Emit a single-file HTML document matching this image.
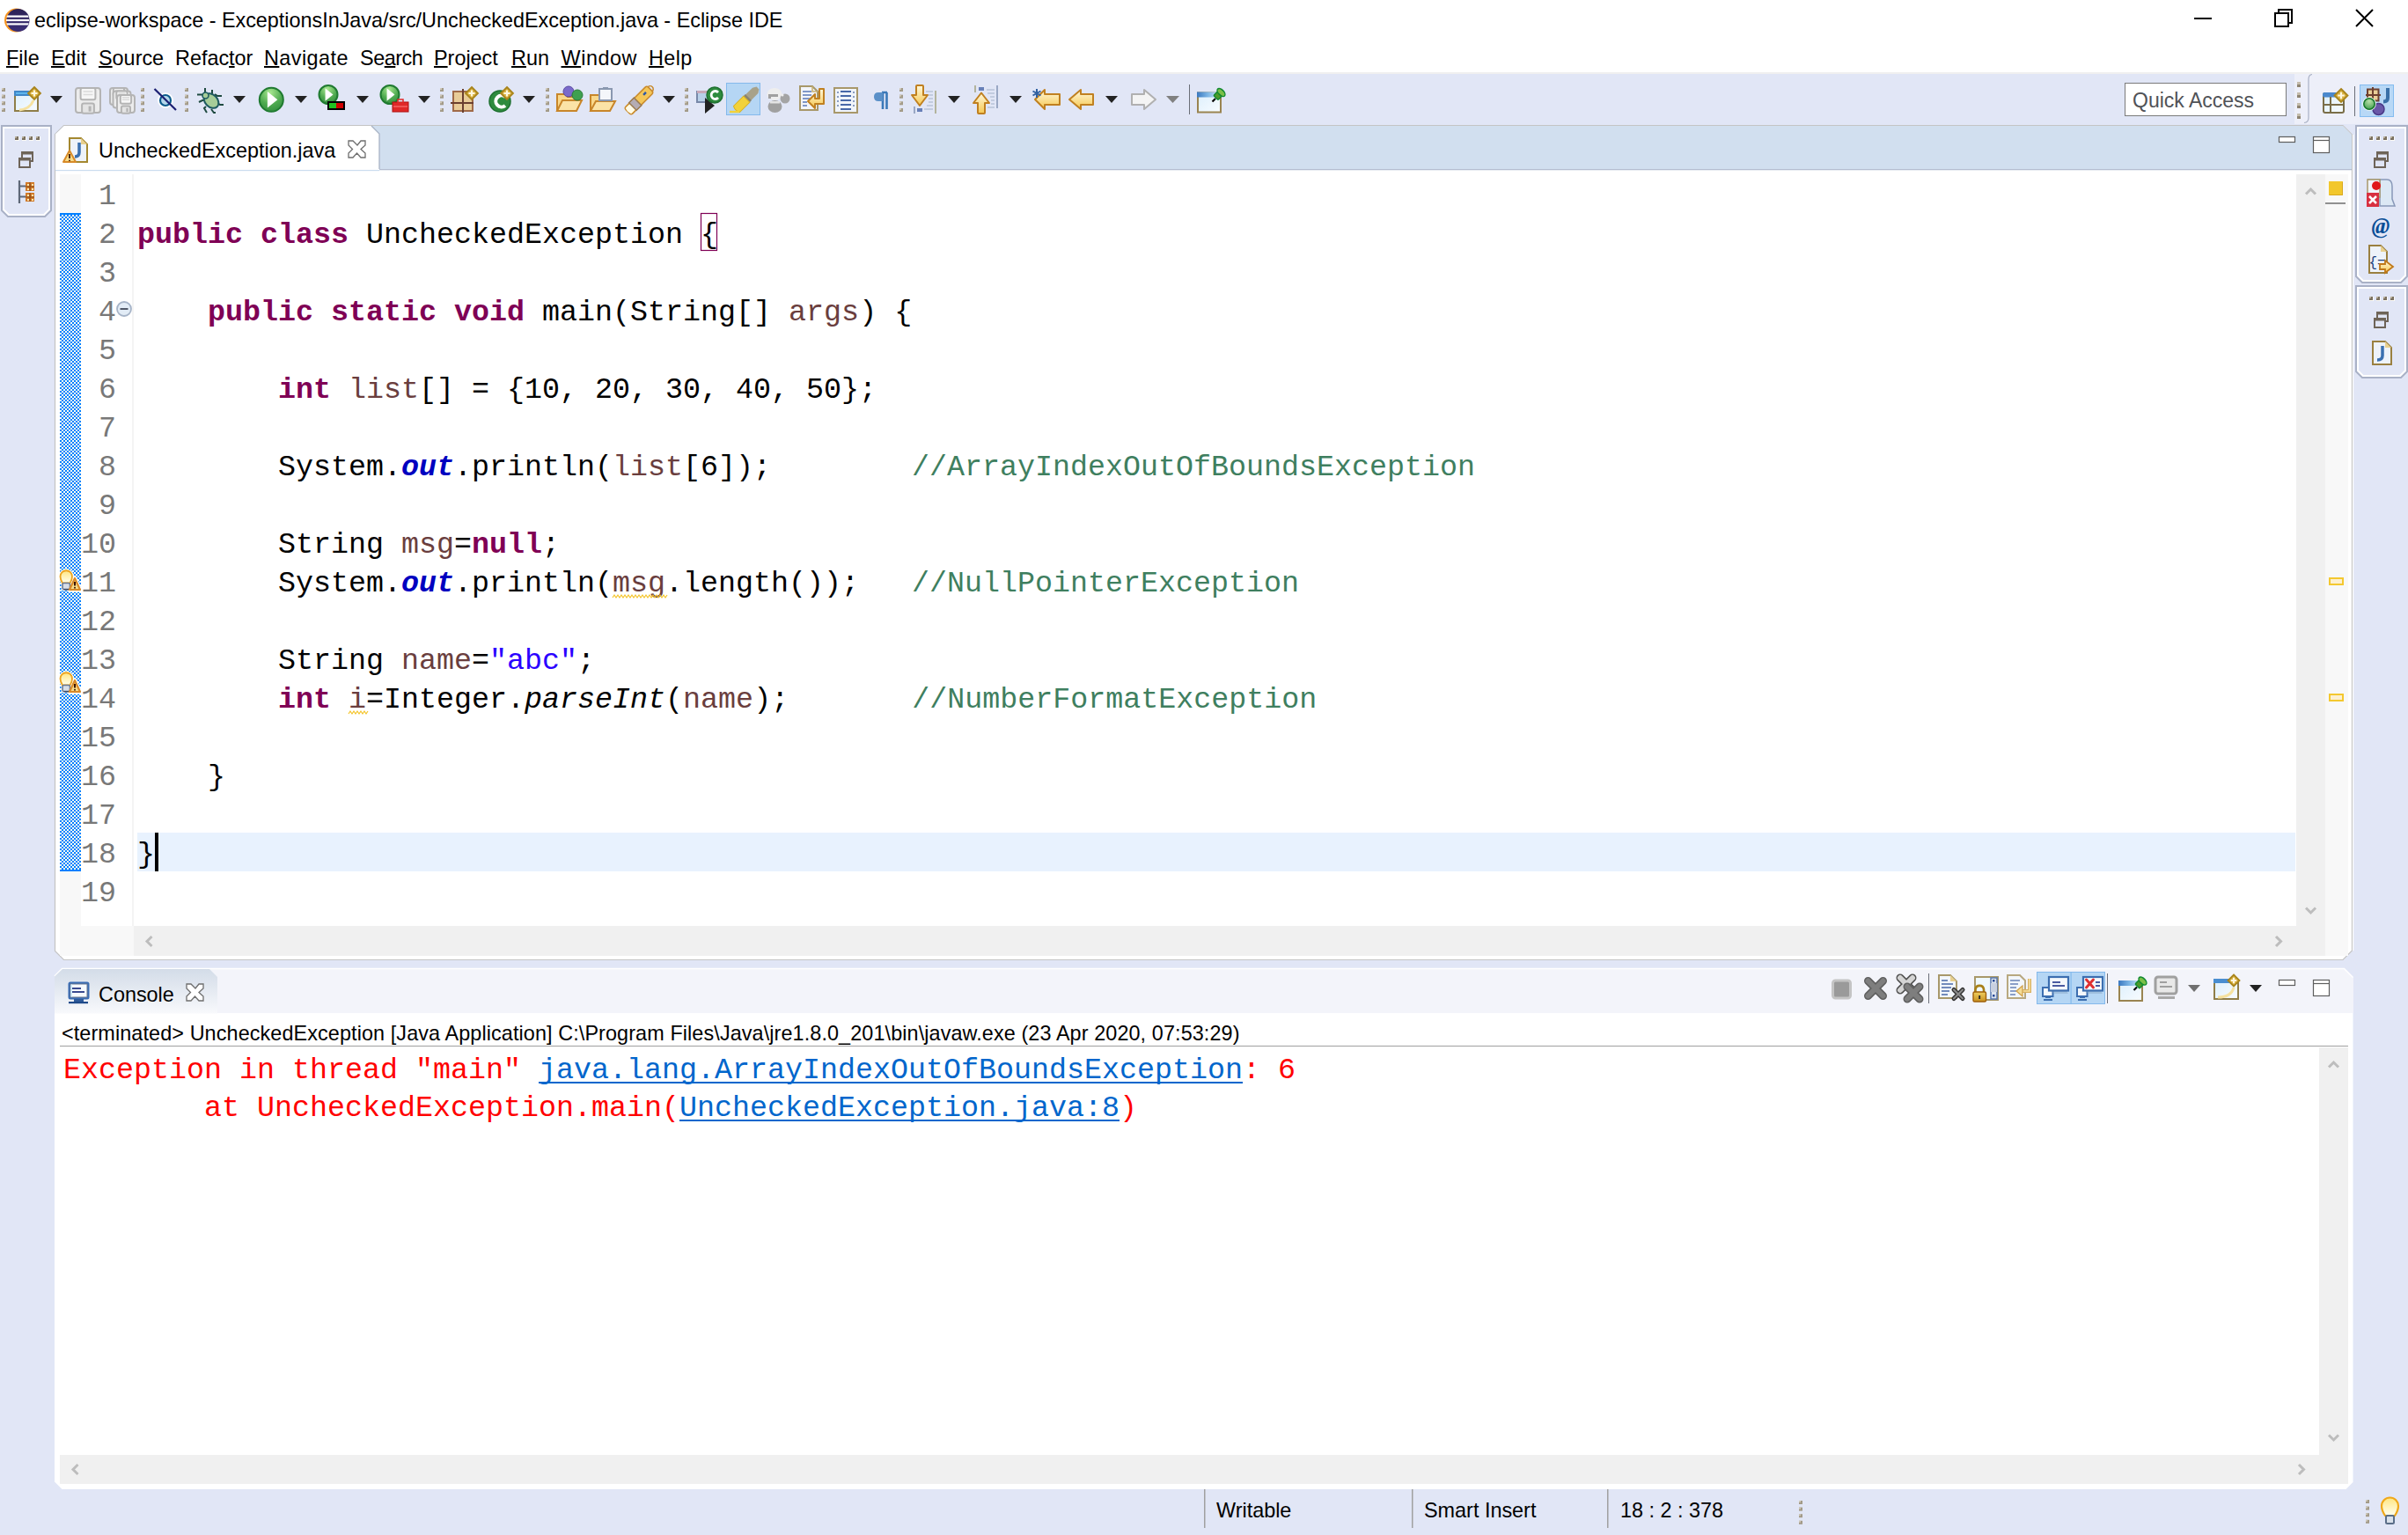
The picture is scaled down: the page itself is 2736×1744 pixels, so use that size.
<!DOCTYPE html>
<html><head><meta charset="utf-8">
<style>
*{margin:0;padding:0;box-sizing:border-box}
html,body{width:2736px;height:1744px;overflow:hidden;background:#E1E6F6;position:relative;font-family:"Liberation Sans",sans-serif}
.a{position:absolute}
.t{position:absolute;white-space:pre;font-size:23.4px;line-height:30px;color:#000}
.m{position:absolute;white-space:pre;font-family:"Liberation Mono",monospace;font-size:33.333px;line-height:44px;color:#000}
.u{text-decoration:underline;text-decoration-thickness:2px;text-underline-offset:1px}
.kw{color:#7F0055;font-weight:bold}
.lv{color:#6A3E3E}
.fld{color:#0000C0;font-weight:bold;font-style:italic}
.it{font-style:italic}
.cm{color:#3F7F5F}
.st{color:#2A00FF}
.ln{color:#787878}
.err{color:#FF0000}
.lnk{color:#0066CC;text-decoration:underline;text-underline-offset:4px;text-decoration-thickness:2px;text-decoration-skip-ink:none}
</style></head><body>

<!-- ===== TITLE + MENU ===== -->
<div class="a" style="left:0;top:0;width:2736px;height:82px;background:#fff"></div>
<div class="a" style="left:0;top:82px;width:2736px;height:2px;background:#F0F0F0"></div>

<div id="title" class="t" style="left:39px;top:8px;letter-spacing:-0.015px">eclipse-workspace - ExceptionsInJava/src/UncheckedException.java - Eclipse IDE</div>

<div id="menu">
<div class="t" style="left:7px;top:51px"><span class="u">F</span>ile</div>
<div class="t" style="left:58px;top:51px"><span class="u">E</span>dit</div>
<div class="t" style="left:112px;top:51px"><span class="u">S</span>ource</div>
<div class="t" style="left:199px;top:51px">Refac<span class="u">t</span>or</div>
<div class="t" style="left:300px;top:51px;letter-spacing:0.45px"><span class="u">N</span>avigate</div>
<div class="t" style="left:409px;top:51px;letter-spacing:-0.45px">Se<span class="u">a</span>rch</div>
<div class="t" style="left:493px;top:51px"><span class="u">P</span>roject</div>
<div class="t" style="left:581px;top:51px"><span class="u">R</span>un</div>
<div class="t" style="left:637.5px;top:51px;letter-spacing:0.55px"><span class="u">W</span>indow</div>
<div class="t" style="left:737px;top:51px;letter-spacing:0.4px"><span class="u">H</span>elp</div>
</div>

<!-- ===== EDITOR PART ===== -->
<svg class="a" style="left:0;top:0" width="2736" height="1744" viewBox="0 0 2736 1744">
<defs><linearGradient id="gTabC" x1="0" y1="0" x2="0" y2="1"><stop offset="0" stop-color="#D3DCE8"/><stop offset="1" stop-color="#F8F9FC"/></linearGradient></defs>
<path d="M72.5 142.5 H2662 L2672.5 153 V1080 L2662 1090.5 H72.5 L62.5 1080.5 V152.5 Z" fill="#fff" stroke="#C4C4C4" stroke-width="1.2"/>
<path d="M63 152.5 L73 143 H2662 L2672 153 V192 H63 Z" fill="#D1DFEF"/>
<rect x="63" y="192" width="2609" height="1.3" fill="#B4BDD0"/>
<path d="M63 152.5 L73 143 H422 L431 152 V193.5 H63 Z" fill="#fff"/>
<path d="M422 143 L431 152 V192" fill="none" stroke="#A9B3C5" stroke-width="1.3"/>
<rect x="63" y="193" width="368" height="1.2" fill="#CBDCEF"/>
<path d="M70.5 1100.5 H2663.5 L2673.5 1110.5 V1684 L2665.5 1692 H70.5 L62 1683.5 V1109 Z" fill="#fff"/>
<path d="M62 1109 L70.5 1100.5 H2663.5 L2673.5 1110.5 V1151 H62 Z" fill="#F3F4FA"/>
<path d="M62 1109 L70.5 1100.5 H2663.5 L2673.5 1110.5" fill="none" stroke="#FFFFFF" stroke-width="1.5"/>
<path d="M62 1109.5 L71 1101 H238 L247 1110 V1151.5 H62 Z" fill="url(#gTabC)"/>
</svg>


<div class="t" style="left:112px;top:156px">UncheckedException.java</div>
<div class="a" style="left:68px;top:198px;width:24px;height:888px;background:#F8F8F8"></div>
<div class="a" style="left:68px;top:242px;width:24px;height:748px;background-color:#FFFEF5;background-image:repeating-conic-gradient(#0080FF 0 25%,transparent 0 50%);background-size:4px 4px;background-position:0 2px;border-top:2px solid #0080FF;border-bottom:2px solid #0080FF"></div>
<div class="a" style="left:92px;top:198px;width:59px;height:854px;background:#fff"></div>
<div class="a" style="left:150px;top:198px;width:2px;height:854px;background:#F4F4F4"></div>
<div class="a" style="left:92px;top:1052px;width:60px;height:34px;background:#F8F8F8"></div>
<div class="a" style="left:156px;top:946px;width:2452px;height:44px;background:#E8F2FE"></div>
<div class="a" style="left:2609px;top:198px;width:33px;height:854px;background:#F0F0F0"></div>
<div class="a" style="left:152px;top:1052px;width:2490px;height:34px;background:#F0F0F0"></div>
<div class="a" style="left:2642px;top:198px;width:26px;height:888px;background:#F8F8F8"></div>
<div class="m ln" style="left:60px;width:72px;text-align:right;top:201px">1</div>
<div class="m ln" style="left:60px;width:72px;text-align:right;top:245px">2</div>
<div class="m ln" style="left:60px;width:72px;text-align:right;top:289px">3</div>
<div class="m ln" style="left:60px;width:72px;text-align:right;top:333px">4</div>
<div class="m ln" style="left:60px;width:72px;text-align:right;top:377px">5</div>
<div class="m ln" style="left:60px;width:72px;text-align:right;top:421px">6</div>
<div class="m ln" style="left:60px;width:72px;text-align:right;top:465px">7</div>
<div class="m ln" style="left:60px;width:72px;text-align:right;top:509px">8</div>
<div class="m ln" style="left:60px;width:72px;text-align:right;top:553px">9</div>
<div class="m ln" style="left:60px;width:72px;text-align:right;top:597px">10</div>
<div class="m ln" style="left:60px;width:72px;text-align:right;top:641px">11</div>
<div class="m ln" style="left:60px;width:72px;text-align:right;top:685px">12</div>
<div class="m ln" style="left:60px;width:72px;text-align:right;top:729px">13</div>
<div class="m ln" style="left:60px;width:72px;text-align:right;top:773px">14</div>
<div class="m ln" style="left:60px;width:72px;text-align:right;top:817px">15</div>
<div class="m ln" style="left:60px;width:72px;text-align:right;top:861px">16</div>
<div class="m ln" style="left:60px;width:72px;text-align:right;top:905px">17</div>
<div class="m ln" style="left:60px;width:72px;text-align:right;top:949px">18</div>
<div class="m ln" style="left:60px;width:72px;text-align:right;top:993px">19</div>
<div class="m" style="left:156px;top:245px"><span class="kw">public</span> <span class="kw">class</span> UncheckedException <span id="brk">{</span></div>
<div class="m" style="left:156px;top:333px">    <span class="kw">public</span> <span class="kw">static</span> <span class="kw">void</span> main(String[] <span class="lv">args</span>) {</div>
<div class="m" style="left:156px;top:421px">        <span class="kw">int</span> <span class="lv">list</span>[] = {10, 20, 30, 40, 50};</div>
<div class="m" style="left:156px;top:509px">        System.<span class="fld">out</span>.println(<span class="lv">list</span>[6]);        <span class="cm">//ArrayIndexOutOfBoundsException</span></div>
<div class="m" style="left:156px;top:597px">        String <span class="lv">msg</span>=<span class="kw">null</span>;</div>
<div class="m" style="left:156px;top:641px">        System.<span class="fld">out</span>.println(<span class="lv sq">msg</span>.length());   <span class="cm">//NullPointerException</span></div>
<div class="m" style="left:156px;top:729px">        String <span class="lv">name</span>=<span class="st">"abc"</span>;</div>
<div class="m" style="left:156px;top:773px">        <span class="kw">int</span> <span class="lv sq">i</span>=Integer.<span class="it">parseInt</span>(<span class="lv">name</span>);       <span class="cm">//NumberFormatException</span></div>
<div class="m" style="left:156px;top:861px">    }</div>
<div class="m" style="left:156px;top:949px">}</div>
<div class="a" style="left:176px;top:946px;width:4px;height:44px;background:#000"></div>

<!-- ===== CONSOLE PART ===== -->



<div class="t" style="left:112px;top:1115px">Console</div>
<div class="t" style="left:70px;top:1159px;letter-spacing:0.1px">&lt;terminated&gt; UncheckedException [Java Application] C:\Program Files\Java\jre1.8.0_201\bin\javaw.exe (23 Apr 2020, 07:53:29)</div>
<div class="a" style="left:68px;top:1188px;width:2600px;height:1px;background:#A0A0A0"></div>
<div class="a" style="left:2635px;top:1190px;width:33px;height:463px;background:#F0F0F0"></div>
<div class="a" style="left:68px;top:1653px;width:2600px;height:33px;background:#F0F0F0"></div>
<div class="m err" style="left:72px;top:1194px">Exception in thread "main" <span class="lnk">java.lang.ArrayIndexOutOfBoundsException</span>: 6</div>
<div class="m err" style="left:72px;top:1237px">        at UncheckedException.main(<span class="lnk">UncheckedException.java:8</span>)</div>

<!-- ===== STATUS BAR ===== -->
<div class="t" style="left:1382px;top:1701px">Writable</div>
<div class="t" style="left:1618px;top:1701px">Smart Insert</div>
<div class="t" style="left:1841px;top:1701px">18 : 2 : 378</div>

<!--S:chrome-->
<svg class="a" style="left:0;top:0" width="2736" height="1744" viewBox="0 0 2736 1744">
<!-- eclipse logo -->
<defs>
<linearGradient id="lg1" x1="0" y1="0" x2="0" y2="1"><stop offset="0" stop-color="#2c2255"/><stop offset="1" stop-color="#3b2f78"/></linearGradient>
<clipPath id="lc"><circle cx="20" cy="23" r="13"/></clipPath>
</defs>
<circle cx="18.5" cy="23" r="13.5" fill="#F7941E"/>
<circle cx="20.5" cy="23" r="13" fill="url(#lg1)"/>
<g clip-path="url(#lc)">
<rect x="5" y="17.5" width="32" height="2.2" fill="#fff"/>
<rect x="5" y="21.9" width="32" height="2.2" fill="#fff"/>
<rect x="5" y="26.3" width="32" height="2.2" fill="#fff"/>
</g>
<!-- window controls -->
<rect x="2493" y="20" width="20" height="2" fill="#000"/>
<rect x="2585" y="15" width="15" height="15" fill="none" stroke="#000" stroke-width="2"/>
<path d="M2589 15 V11 H2604 V26 H2600" fill="none" stroke="#000" stroke-width="2"/>
<path d="M2677 11 L2696 30 M2696 11 L2677 30" stroke="#000" stroke-width="2"/>
</svg>

<!--E:chrome-->
<!--S:icons-->
<svg class="a" style="left:0;top:0" width="2736" height="1744" viewBox="0 0 2736 1744"><defs>
<radialGradient id="gGreen" cx="0.45" cy="0.2" r="0.9"><stop offset="0" stop-color="#A8E890"/><stop offset="0.55" stop-color="#4FAA50"/><stop offset="1" stop-color="#2E8A3C"/></radialGradient>
<linearGradient id="gGold" x1="0" y1="0" x2="0" y2="1"><stop offset="0" stop-color="#FFF8DC"/><stop offset="1" stop-color="#F6C850"/></linearGradient>
<linearGradient id="gWin" x1="0" y1="0" x2="1" y2="1"><stop offset="0" stop-color="#DDEFFC"/><stop offset="1" stop-color="#F8FCFF"/></linearGradient>
<linearGradient id="gTitle" x1="0" y1="0" x2="1" y2="0"><stop offset="0" stop-color="#3A78C0"/><stop offset="0.5" stop-color="#7AB4E4"/><stop offset="1" stop-color="#C8E0F4"/></linearGradient>
<linearGradient id="gLock" x1="0" y1="0" x2="0" y2="1"><stop offset="0" stop-color="#F0D060"/><stop offset="1" stop-color="#C89020"/></linearGradient>
<radialGradient id="gSph" cx="0.5" cy="0.3" r="0.7"><stop offset="0" stop-color="#B8E0A8"/><stop offset="1" stop-color="#3A9A48"/></radialGradient>
<linearGradient id="gBulb" x1="0" y1="0" x2="0" y2="1"><stop offset="0" stop-color="#FFE680"/><stop offset="1" stop-color="#FFFFF0"/></linearGradient>
</defs><rect x="2" y="100.0" width="4" height="4" fill="#A39B88"/><rect x="2" y="100.0" width="2" height="2" fill="#CFC8B8"/>
<rect x="2" y="107.7" width="4" height="4" fill="#A39B88"/><rect x="2" y="107.7" width="2" height="2" fill="#CFC8B8"/>
<rect x="2" y="115.3" width="4" height="4" fill="#A39B88"/><rect x="2" y="115.3" width="2" height="2" fill="#CFC8B8"/>
<rect x="2" y="123.0" width="4" height="4" fill="#A39B88"/><rect x="2" y="123.0" width="2" height="2" fill="#CFC8B8"/>
<rect x="17" y="104" width="26" height="22" fill="url(#gWin)" stroke="#8F7E48" stroke-width="2"/>
<rect x="16" y="103" width="22" height="6" fill="#3F87C8"/><rect x="18" y="105" width="18" height="2" fill="#5DB6EC"/>
<path d="M22 125 Q34 124 38 114" stroke="#F6E2A0" stroke-width="3" fill="none"/>
<polygon points="39,99 46,106 39,113 32,106" fill="#D9B040" stroke="#A8841C" stroke-width="1.8"/>
<path d="M35.5 106 H42.5 M39 102.5 V109.5" stroke="#FFF8E0" stroke-width="2.2"/>
<polygon points="57,109 71,109 64.0,117" fill="#222"/>
<rect x="86" y="100" width="28" height="28" rx="3" fill="#ECECEC" stroke="#B4B4B4" stroke-width="2"/>
<rect x="91.6" y="100" width="16.8" height="13.2" rx="2" fill="#F6F6F6" stroke="#B4B4B4" stroke-width="2"/>
<path d="M94.6 104.1 H105.4 M94.6 107.4 H105.4" stroke="#DADADA" stroke-width="1.5"/>
<rect x="93.1" y="117.6" width="13.8" height="11.1" rx="2" fill="#E4E4E4" stroke="#B4B4B4" stroke-width="2"/>
<rect x="100.6" y="120.6" width="3.0" height="6.0" fill="#B4B4B4"/>
<rect x="125" y="100" width="20" height="19" rx="3" fill="#ECECEC" stroke="#B4B4B4" stroke-width="2"/>
<rect x="128.8" y="100" width="12.3" height="9.2" rx="2" fill="#F6F6F6" stroke="#B4B4B4" stroke-width="2"/>
<path d="M131.0 102.6 H139.0 M131.0 104.9 H139.0" stroke="#DADADA" stroke-width="1.5"/>
<rect x="129.9" y="112.0" width="10.1" height="7.8" rx="2" fill="#E4E4E4" stroke="#B4B4B4" stroke-width="2"/>
<rect x="135.4" y="114.1" width="2.2" height="4.2" fill="#B4B4B4"/>
<rect x="128.5" y="103.5" width="20" height="19" rx="3" fill="#ECECEC" stroke="#B4B4B4" stroke-width="2"/>
<rect x="132.3" y="103.5" width="12.3" height="9.2" rx="2" fill="#F6F6F6" stroke="#B4B4B4" stroke-width="2"/>
<path d="M134.5 106.1 H142.5 M134.5 108.4 H142.5" stroke="#DADADA" stroke-width="1.5"/>
<rect x="133.4" y="115.5" width="10.1" height="7.8" rx="2" fill="#E4E4E4" stroke="#B4B4B4" stroke-width="2"/>
<rect x="138.9" y="117.6" width="2.2" height="4.2" fill="#B4B4B4"/>
<rect x="133" y="108" width="20" height="20" rx="3" fill="#ECECEC" stroke="#B4B4B4" stroke-width="2"/>
<rect x="136.8" y="108" width="12.3" height="9.7" rx="2" fill="#F6F6F6" stroke="#B4B4B4" stroke-width="2"/>
<path d="M139.0 110.7 H147.0 M139.0 113.2 H147.0" stroke="#DADADA" stroke-width="1.5"/>
<rect x="137.9" y="120.6" width="10.1" height="8.1" rx="2" fill="#E4E4E4" stroke="#B4B4B4" stroke-width="2"/>
<rect x="143.4" y="122.8" width="2.2" height="4.4" fill="#B4B4B4"/>
<rect x="160" y="100.0" width="4" height="4" fill="#A39B88"/><rect x="160" y="100.0" width="2" height="2" fill="#CFC8B8"/>
<rect x="160" y="107.7" width="4" height="4" fill="#A39B88"/><rect x="160" y="107.7" width="2" height="2" fill="#CFC8B8"/>
<rect x="160" y="115.3" width="4" height="4" fill="#A39B88"/><rect x="160" y="115.3" width="2" height="2" fill="#CFC8B8"/>
<rect x="160" y="123.0" width="4" height="4" fill="#A39B88"/><rect x="160" y="123.0" width="2" height="2" fill="#CFC8B8"/>
<circle cx="188" cy="114" r="9" fill="#fff" opacity="0.9"/><circle cx="188" cy="114" r="6" fill="#B3D6EA" stroke="#0B5B8C" stroke-width="2.2"/>
<path d="M175.5 101 L200 125" stroke="#1B1F72" stroke-width="2.2"/>
<rect x="210" y="100.0" width="4" height="4" fill="#A39B88"/><rect x="210" y="100.0" width="2" height="2" fill="#CFC8B8"/>
<rect x="210" y="107.7" width="4" height="4" fill="#A39B88"/><rect x="210" y="107.7" width="2" height="2" fill="#CFC8B8"/>
<rect x="210" y="115.3" width="4" height="4" fill="#A39B88"/><rect x="210" y="115.3" width="2" height="2" fill="#CFC8B8"/>
<rect x="210" y="123.0" width="4" height="4" fill="#A39B88"/><rect x="210" y="123.0" width="2" height="2" fill="#CFC8B8"/>
<g stroke="#1E4A40" stroke-width="2" fill="none"><path d="M233 100 V108 M241 102 V106 L237 110 M224 107.5 H233 M226 116 L230 114 L234 114 M244 107 L247 109 H252 M234 121 L232 123 L235 128 M240 124 L243 128 L245 128 M247 117 L250 119 L254 119"/></g>
<ellipse cx="240" cy="114.5" rx="9.5" ry="7" transform="rotate(45 240 114.5)" fill="#A6CC98" stroke="#1E5A60" stroke-width="2"/>
<circle cx="233.5" cy="108.5" r="3.5" fill="#A6CC98" stroke="#1E5A60" stroke-width="1.6"/>
<polygon points="265,109 279,109 272.0,117" fill="#222"/>
<circle cx="308.3" cy="113.3" r="13.5" fill="url(#gGreen)" stroke="#1F7A30" stroke-width="2"/>
<polygon points="303.845,104.11999999999999 303.845,122.48 315.32,113.3" fill="#fff"/>
<polygon points="335,109 349,109 342.0,117" fill="#222"/>
<circle cx="373" cy="107.5" r="10.5" fill="url(#gGreen)" stroke="#1F7A30" stroke-width="2"/>
<polygon points="369.535,100.36 369.535,114.64 378.46,107.5" fill="#fff"/>
<rect x="372" y="115" width="20" height="10" fill="#000"/><rect x="374" y="117" width="8" height="6" fill="#22C322"/><rect x="382" y="117" width="8" height="6" fill="#D00000"/>
<polygon points="405,109 419,109 412.0,117" fill="#222"/>
<circle cx="443" cy="107.5" r="10.5" fill="url(#gGreen)" stroke="#1F7A30" stroke-width="2"/>
<polygon points="439.535,100.36 439.535,114.64 448.46,107.5" fill="#fff"/>
<rect x="446" y="116" width="18" height="11" fill="#E02828" stroke="#B01010" stroke-width="1"/><rect x="452" y="113" width="6" height="4" fill="none" stroke="#E02828" stroke-width="1.5"/><path d="M447 121 H463" stroke="#FF8080" stroke-width="1"/>
<polygon points="475,109 489,109 482.0,117" fill="#222"/>
<rect x="500" y="100.0" width="4" height="4" fill="#A39B88"/><rect x="500" y="100.0" width="2" height="2" fill="#CFC8B8"/>
<rect x="500" y="107.7" width="4" height="4" fill="#A39B88"/><rect x="500" y="107.7" width="2" height="2" fill="#CFC8B8"/>
<rect x="500" y="115.3" width="4" height="4" fill="#A39B88"/><rect x="500" y="115.3" width="2" height="2" fill="#CFC8B8"/>
<rect x="500" y="123.0" width="4" height="4" fill="#A39B88"/><rect x="500" y="123.0" width="2" height="2" fill="#CFC8B8"/>
<rect x="515" y="104" width="22" height="22" fill="#E8CC98" stroke="#A06A48" stroke-width="2"/><path d="M526 101 V128 M512 117 H538" stroke="#6A4030" stroke-width="2"/>
<polygon points="536,99 543,106 536,113 529,106" fill="#D9B040" stroke="#A8841C" stroke-width="1.8"/>
<path d="M532.5 106 H539.5 M536 102.5 V109.5" stroke="#FFF8E0" stroke-width="2.2"/>
<circle cx="568" cy="115" r="12" fill="#2E8B3E" stroke="#1E7030" stroke-width="1.5"/><path d="M574 110 A6.5 6.5 0 1 0 574 120" stroke="#fff" stroke-width="4" fill="none"/>
<polygon points="576,99 583,106 576,113 569,106" fill="#D9B040" stroke="#A8841C" stroke-width="1.8"/>
<path d="M572.5 106 H579.5 M576 102.5 V109.5" stroke="#FFF8E0" stroke-width="2.2"/>
<polygon points="594,109 608,109 601.0,117" fill="#222"/>
<rect x="620" y="100.0" width="4" height="4" fill="#A39B88"/><rect x="620" y="100.0" width="2" height="2" fill="#CFC8B8"/>
<rect x="620" y="107.7" width="4" height="4" fill="#A39B88"/><rect x="620" y="107.7" width="2" height="2" fill="#CFC8B8"/>
<rect x="620" y="115.3" width="4" height="4" fill="#A39B88"/><rect x="620" y="115.3" width="2" height="2" fill="#CFC8B8"/>
<rect x="620" y="123.0" width="4" height="4" fill="#A39B88"/><rect x="620" y="123.0" width="2" height="2" fill="#CFC8B8"/>
<path d="M633 126 V107 H642 L645 110 H656 V114" fill="#F9D88A" stroke="#C8862A" stroke-width="2"/>
<path d="M633 126 L639 114 H661 L655 126 Z" fill="#FBE3A6" stroke="#C8862A" stroke-width="2"/>
<circle cx="646" cy="104" r="6" fill="#7A6ACB" stroke="#5848A0" stroke-width="1"/><circle cx="656" cy="108" r="6" fill="#3FA050" stroke="#2A7A38" stroke-width="1"/>
<path d="M671 126 V108 H680 L683 111 H694 V115" fill="#F9D88A" stroke="#C8862A" stroke-width="2"/>
<path d="M671 126 L677 115 H699 L693 126 Z" fill="#FBE3A6" stroke="#C8862A" stroke-width="2"/>
<rect x="681" y="101" width="14" height="13" fill="#F4F6FA" stroke="#8A98B0" stroke-width="2"/><rect x="685" y="99" width="6" height="3" fill="#8A98B0"/>
<g transform="rotate(-45 726 114)"><rect x="708" y="108.5" width="36" height="11" rx="2.5" fill="#F4C658" stroke="#C98A2C" stroke-width="1.5"/><path d="M709 109.5 H716 V118.5 H709 Q707 114 709 109.5 Z" fill="#FFFBE6"/><rect x="716" y="108" width="8" height="12" fill="#B4ACB4" stroke="#9A7A50" stroke-width="1.5"/><rect x="734" y="112" width="4" height="2.5" fill="#2E58A8"/><path d="M744 110.5 A3.5 3.5 0 0 1 744 117.5" fill="none" stroke="#C98A2C" stroke-width="1.5"/></g>
<polygon points="753,109 767,109 760.0,117" fill="#222"/>
<rect x="778" y="100.0" width="4" height="4" fill="#A39B88"/><rect x="778" y="100.0" width="2" height="2" fill="#CFC8B8"/>
<rect x="778" y="107.7" width="4" height="4" fill="#A39B88"/><rect x="778" y="107.7" width="2" height="2" fill="#CFC8B8"/>
<rect x="778" y="115.3" width="4" height="4" fill="#A39B88"/><rect x="778" y="115.3" width="2" height="2" fill="#CFC8B8"/>
<rect x="778" y="123.0" width="4" height="4" fill="#A39B88"/><rect x="778" y="123.0" width="2" height="2" fill="#CFC8B8"/>
<rect x="792" y="104" width="16" height="12" fill="#B8D0E8" stroke="#7888A8" stroke-width="2"/><rect x="792" y="103" width="14" height="3" fill="#C8A8B8"/>
<polygon points="801,111 801,129 812,120" fill="#222"/>
<circle cx="812" cy="108" r="9" fill="#2E8B3E" stroke="#1E7030" stroke-width="1.5"/><path d="M816 105 A4.5 4.5 0 1 0 816 111" stroke="#fff" stroke-width="2.8" fill="none"/>
<rect x="825.5" y="94.5" width="38" height="36" fill="#B5D6F4" stroke="#84B9EC" stroke-width="1"/>
<g transform="rotate(-45 849 112)"><path d="M850 107.5 H862 L866 110 V114 L862 116.5 H850 Z" fill="#A8A28A"/><rect x="848" y="107" width="3" height="10" fill="#8A8470"/><path d="M832 107 H848 V117 H832 Q829 112 832 107 Z" fill="#F2D23A" stroke="#D8B020" stroke-width="1"/></g>
<path d="M829 127 H840" stroke="#F2D23A" stroke-width="2.5"/>
<ellipse cx="880" cy="107" rx="8.5" ry="7" fill="#EEEEEE"/><rect x="873" y="107" width="11" height="3" fill="#A0A0A0"/><rect x="873" y="107" width="3" height="5" fill="#A0A0A0"/>
<circle cx="892" cy="112" r="5.5" fill="#A4A4A4"/><circle cx="889" cy="108" r="1.5" fill="#EEEEEE"/>
<ellipse cx="880.5" cy="121" rx="8" ry="7" fill="#A0A0A0"/><rect x="875" y="115" width="11" height="2.5" fill="#E4E4E4"/>
<path d="M909 98 H923 L929 104 V125 H909 Z" fill="#F2F5FA" stroke="#A8986A" stroke-width="2"/><path d="M923 98 V104 H929" fill="none" stroke="#C8B070" stroke-width="1.5"/>
<path d="M912 104 H922 M912 108 H922 M912 112 H920 M912 116 H917 M912 120 H917" stroke="#5A78B8" stroke-width="1.6"/>
<path d="M931 101 H936 V118 H926 V123 L918 115 L926 107 V112 H931 Z" fill="url(#gGold)" stroke="#C08020" stroke-width="2" stroke-linejoin="round"/>
<rect x="948" y="100" width="26" height="28" fill="#F0F4FA" stroke="#A8986A" stroke-width="2"/>
<path d="M955 104 H967 M955 109 H967 M955 114 H967 M955 119 H967 M955 124 H967" stroke="#4868A8" stroke-width="2"/><path d="M952 104 V124 M970 104 V124" stroke="#6880B0" stroke-width="1.5" stroke-dasharray="2 3"/>
<path d="M1002 105 H1008 M1003 105 V124 M1007.5 105 V124" stroke="#3A78B8" stroke-width="2.6"/><path d="M1003 105 H998 Q993 105 993 110 Q993 115 998 115 H1003 Z" fill="#5A90C8"/>
<rect x="1022" y="100.0" width="4" height="4" fill="#A39B88"/><rect x="1022" y="100.0" width="2" height="2" fill="#CFC8B8"/>
<rect x="1022" y="107.7" width="4" height="4" fill="#A39B88"/><rect x="1022" y="107.7" width="2" height="2" fill="#CFC8B8"/>
<rect x="1022" y="115.3" width="4" height="4" fill="#A39B88"/><rect x="1022" y="115.3" width="2" height="2" fill="#CFC8B8"/>
<rect x="1022" y="123.0" width="4" height="4" fill="#A39B88"/><rect x="1022" y="123.0" width="2" height="2" fill="#CFC8B8"/>
<path d="M1052 104 H1060 M1055 108 H1060 M1055 112 H1060 M1055 116 H1060 M1053 120 H1060 M1050 124 H1060" stroke="#B8C4D8" stroke-width="1.5"/><path d="M1063 103 V129" stroke="#A8A888" stroke-width="1.6"/><rect x="1042" y="123" width="6" height="4" fill="#6880B8"/><path d="M1039 121 V129" stroke="#8898B8" stroke-width="1.6"/>
<path d="M1041 98 Q1041 97 1042 97 H1048 Q1049 97 1049 98 V108 H1054 L1045 120 L1036 108 H1041 Z" fill="url(#gGold)" stroke="#C08020" stroke-width="2" stroke-linejoin="round"/>
<polygon points="1077,109 1091,109 1084.0,117" fill="#222"/>
<path d="M1121 102 H1130 M1122 106 H1130 M1125 110 H1130 M1126 114 H1130 M1126 118 H1130 M1122 122 H1130" stroke="#B8C4D8" stroke-width="1.5"/><path d="M1133 97 V123" stroke="#8898B8" stroke-width="1.6"/><rect x="1112" y="99" width="6" height="4" fill="#6880B8"/><path d="M1108 97 V105" stroke="#A8A888" stroke-width="1.6"/>
<path d="M1111 128 Q1111 129 1112 129 H1118 Q1119 129 1119 128 V117 H1124 L1115 105.5 L1106 117 H1111 Z" fill="url(#gGold)" stroke="#C08020" stroke-width="2" stroke-linejoin="round"/>
<polygon points="1147,109 1161,109 1154.0,117" fill="#222"/>
<path d="M1204 107 H1187 V102 L1176 113 L1187 124 V119 H1204 Z" fill="url(#gGold)" stroke="#C08020" stroke-width="2" stroke-linejoin="round"/>
<path d="M1178 101 V111 M1173.5 103.5 L1182.5 108.5 M1182.5 103.5 L1173.5 108.5" stroke="#3060A0" stroke-width="2"/>
<path d="M1242 107 H1228 V102 L1215 113 L1228 124 V119 H1242 Z" fill="url(#gGold)" stroke="#C08020" stroke-width="2" stroke-linejoin="round"/>
<polygon points="1256,109 1270,109 1263.0,117" fill="#222"/>
<path d="M1286 107 H1300 V102 L1313 113 L1300 124 V119 H1286 Z" fill="#F4F4F4" stroke="#B0B0B0" stroke-width="2" stroke-linejoin="round"/>
<polygon points="1325,109 1340,109 1332.5,117" fill="#808080"/>
<rect x="1351" y="96" width="1" height="34" fill="#6A6E78"/>
<rect x="1361" y="105.5" width="26" height="22" fill="url(#gWin)" stroke="#9A8450" stroke-width="2"/>
<rect x="1360" y="104.5" width="24" height="6" fill="url(#gTitle)"/>
<path d="M1377.5 115.5 L1381 112.0" stroke="#000" stroke-width="2.2"/>
<g transform="rotate(45 1385 107.5)"><rect x="1381.5" y="105.5" width="7" height="7" rx="1" fill="#4E9A2A" stroke="#138A30" stroke-width="1.5"/><ellipse cx="1385" cy="104.0" rx="5.5" ry="3" fill="#7CC048" stroke="#138A30" stroke-width="1.5"/></g>
<rect x="2414.5" y="94.5" width="183" height="37" fill="#fff" stroke="#7A7A7A" stroke-width="1"/>
<rect x="2607" y="84" width="129" height="57" fill="#EDEFF9"/>
<rect x="2610" y="93" width="4" height="6" fill="#8E8472"/><rect x="2610" y="93" width="4" height="3" fill="#C4BCAC"/>
<rect x="2610" y="105" width="4" height="6" fill="#8E8472"/><rect x="2610" y="105" width="4" height="3" fill="#C4BCAC"/>
<rect x="2610" y="117" width="4" height="6" fill="#8E8472"/><rect x="2610" y="117" width="4" height="3" fill="#C4BCAC"/>
<rect x="2610" y="129" width="4" height="6" fill="#8E8472"/><rect x="2610" y="129" width="4" height="3" fill="#C4BCAC"/>
<path d="M2627 84.5 Q2623 85 2623 90 V134 Q2623 139 2618 139.5" fill="none" stroke="#A8B0C4" stroke-width="1.2"/>
<rect x="2640" y="106" width="23" height="22" rx="2" fill="url(#gWin)" stroke="#7A6E48" stroke-width="2"/><rect x="2639" y="105" width="20" height="5.5" rx="2" fill="#4A88CC"/><path d="M2648 110 V128 M2640 119 H2663" stroke="#7A6E48" stroke-width="2" fill="none"/>
<polygon points="2660,101.0 2667.5,108.5 2660,116.0 2652.5,108.5" fill="#D9B040" stroke="#A8841C" stroke-width="1.8"/>
<path d="M2656.2 108.5 H2663.8 M2660 104.8 V112.2" stroke="#FFF8E0" stroke-width="2.2"/>
<rect x="2675" y="98" width="1" height="34" fill="#6A6E78"/>
<rect x="2681.5" y="96.5" width="38" height="36" fill="#B8D8F6" stroke="#84BCF0" stroke-width="1"/>
<rect x="2690" y="101.5" width="12.5" height="13" fill="#EBCF98" stroke="#6E4030" stroke-width="2"/><path d="M2696 99 V115 M2688 108 H2705" stroke="#6E4030" stroke-width="2"/>
<path d="M2713 100 V111 Q2713 115.5 2708 115.5" stroke="#3A70A8" stroke-width="4" fill="none"/>
<circle cx="2702.5" cy="124" r="6.5" fill="#6A58A8" stroke="#4A3A88" stroke-width="1.5"/><circle cx="2692" cy="118" r="7.2" fill="url(#gSph)" stroke="#fff" stroke-width="1.2"/><circle cx="2692" cy="118" r="6.2" fill="none" stroke="#1A7A30" stroke-width="1.6"/>
<rect x="1368" y="1692" width="1.5" height="44" fill="#A0A0A0"/><rect x="1604" y="1692" width="1.5" height="44" fill="#A0A0A0"/><rect x="1826" y="1692" width="1.5" height="44" fill="#A0A0A0"/>
<rect x="2044" y="1705.0" width="4" height="4" fill="#A39B88"/><rect x="2044" y="1705.0" width="2" height="2" fill="#CFC8B8"/>
<rect x="2044" y="1712.6" width="4" height="4" fill="#A39B88"/><rect x="2044" y="1712.6" width="2" height="2" fill="#CFC8B8"/>
<rect x="2044" y="1720.2" width="4" height="4" fill="#A39B88"/><rect x="2044" y="1720.2" width="2" height="2" fill="#CFC8B8"/>
<rect x="2044" y="1727.8" width="4" height="4" fill="#A39B88"/><rect x="2044" y="1727.8" width="2" height="2" fill="#CFC8B8"/>
<rect x="2688" y="1704.0" width="4" height="4" fill="#A39B88"/><rect x="2688" y="1704.0" width="2" height="2" fill="#CFC8B8"/>
<rect x="2688" y="1711.6" width="4" height="4" fill="#A39B88"/><rect x="2688" y="1711.6" width="2" height="2" fill="#CFC8B8"/>
<rect x="2688" y="1719.2" width="4" height="4" fill="#A39B88"/><rect x="2688" y="1719.2" width="2" height="2" fill="#CFC8B8"/>
<rect x="2688" y="1726.8" width="4" height="4" fill="#A39B88"/><rect x="2688" y="1726.8" width="2" height="2" fill="#CFC8B8"/>
<path d="M2710 1722 Q2706 1716 2706 1711 A9.5 9.5 0 0 1 2725 1711 Q2725 1716 2721 1722 Z" fill="url(#gBulb)" stroke="#F0A818" stroke-width="2.2"/><rect x="2711" y="1722" width="9" height="9" rx="1.5" fill="#D8E0EA" stroke="#5A6E88" stroke-width="2"/></svg>
<div class="t" style="left:2423px;top:99px;color:#505257;font-size:23px">Quick Access</div>
<!--E:icons-->
<!--S:parts-->
<svg class="a" style="left:0;top:0" width="2736" height="1744" viewBox="0 0 2736 1744"><path d="M2 143 H58 V239 L51 246 H9 L2 239 Z" fill="#E1E6F6" stroke="#A9B1C6" stroke-width="2"/>
<path d="M4 145 H56 V238 L50 244 H10 L4 238 Z" fill="none" stroke="#FFFFFF" stroke-width="2"/>
<rect x="17" y="155" width="5" height="5" fill="#FBFAF6"/><rect x="17" y="155" width="4" height="4" fill="#7A7060"/><rect x="17" y="155" width="2" height="2" fill="#B8AE98"/>
<rect x="25" y="155" width="5" height="5" fill="#FBFAF6"/><rect x="25" y="155" width="4" height="4" fill="#7A7060"/><rect x="25" y="155" width="2" height="2" fill="#B8AE98"/>
<rect x="33" y="155" width="5" height="5" fill="#FBFAF6"/><rect x="33" y="155" width="4" height="4" fill="#7A7060"/><rect x="33" y="155" width="2" height="2" fill="#B8AE98"/>
<rect x="41" y="155" width="5" height="5" fill="#FBFAF6"/><rect x="41" y="155" width="4" height="4" fill="#7A7060"/><rect x="41" y="155" width="2" height="2" fill="#B8AE98"/>
<rect x="25" y="173" width="12" height="10" fill="none" stroke="#6E6458" stroke-width="2"/><rect x="25" y="172" width="12" height="3.5" fill="#6E6458"/>
<rect x="22" y="180" width="12" height="10" fill="#E1E6F6" stroke="#6E6458" stroke-width="2"/><rect x="21" y="179" width="14" height="3.5" fill="#6E6458"/>
<path d="M22 205 V231 M22 211.5 H29 M22 223.5 H29" stroke="#5E6878" stroke-width="2.2"/>
<rect x="29" y="207" width="10" height="10" fill="#D07A2A"/><path d="M34 207 V217 M29 212 H39" stroke="#8A4A18" stroke-width="1.2"/>
<rect x="31" y="209" width="2" height="2" fill="#FFE8B0"/>
<rect x="31" y="214" width="2" height="2" fill="#FFE8B0"/>
<rect x="36" y="209" width="2" height="2" fill="#FFE8B0"/>
<rect x="36" y="214" width="2" height="2" fill="#FFE8B0"/>
<rect x="29" y="219" width="10" height="10" fill="#D07A2A"/><path d="M34 219 V229 M29 224 H39" stroke="#8A4A18" stroke-width="1.2"/>
<rect x="31" y="221" width="2" height="2" fill="#FFE8B0"/>
<rect x="31" y="226" width="2" height="2" fill="#FFE8B0"/>
<rect x="36" y="221" width="2" height="2" fill="#FFE8B0"/>
<rect x="36" y="226" width="2" height="2" fill="#FFE8B0"/>
<path d="M2677 143 H2735 V314 L2728 321 H2684 L2677 314 Z" fill="#E1E6F6" stroke="#A9B1C6" stroke-width="2"/>
<path d="M2679 145 H2733 V313 L2727 319 H2685 L2679 313 Z" fill="none" stroke="#FFFFFF" stroke-width="2"/>
<rect x="2692" y="155" width="5" height="5" fill="#FBFAF6"/><rect x="2692" y="155" width="4" height="4" fill="#7A7060"/><rect x="2692" y="155" width="2" height="2" fill="#B8AE98"/>
<rect x="2700" y="155" width="5" height="5" fill="#FBFAF6"/><rect x="2700" y="155" width="4" height="4" fill="#7A7060"/><rect x="2700" y="155" width="2" height="2" fill="#B8AE98"/>
<rect x="2708" y="155" width="5" height="5" fill="#FBFAF6"/><rect x="2708" y="155" width="4" height="4" fill="#7A7060"/><rect x="2708" y="155" width="2" height="2" fill="#B8AE98"/>
<rect x="2716" y="155" width="5" height="5" fill="#FBFAF6"/><rect x="2716" y="155" width="4" height="4" fill="#7A7060"/><rect x="2716" y="155" width="2" height="2" fill="#B8AE98"/>
<rect x="2701" y="173" width="12" height="10" fill="none" stroke="#6E6458" stroke-width="2"/><rect x="2701" y="172" width="12" height="3.5" fill="#6E6458"/>
<rect x="2698" y="180" width="12" height="10" fill="#E1E6F6" stroke="#6E6458" stroke-width="2"/><rect x="2697" y="179" width="14" height="3.5" fill="#6E6458"/>
<path d="M2677 325 H2735 V422 L2728 429 H2684 L2677 422 Z" fill="#E1E6F6" stroke="#A9B1C6" stroke-width="2"/>
<path d="M2679 327 H2733 V421 L2727 427 H2685 L2679 421 Z" fill="none" stroke="#FFFFFF" stroke-width="2"/>
<rect x="2692" y="337" width="5" height="5" fill="#FBFAF6"/><rect x="2692" y="337" width="4" height="4" fill="#7A7060"/><rect x="2692" y="337" width="2" height="2" fill="#B8AE98"/>
<rect x="2700" y="337" width="5" height="5" fill="#FBFAF6"/><rect x="2700" y="337" width="4" height="4" fill="#7A7060"/><rect x="2700" y="337" width="2" height="2" fill="#B8AE98"/>
<rect x="2708" y="337" width="5" height="5" fill="#FBFAF6"/><rect x="2708" y="337" width="4" height="4" fill="#7A7060"/><rect x="2708" y="337" width="2" height="2" fill="#B8AE98"/>
<rect x="2716" y="337" width="5" height="5" fill="#FBFAF6"/><rect x="2716" y="337" width="4" height="4" fill="#7A7060"/><rect x="2716" y="337" width="2" height="2" fill="#B8AE98"/>
<rect x="2701" y="355" width="12" height="10" fill="none" stroke="#6E6458" stroke-width="2"/><rect x="2701" y="354" width="12" height="3.5" fill="#6E6458"/>
<rect x="2698" y="362" width="12" height="10" fill="#E1E6F6" stroke="#6E6458" stroke-width="2"/><rect x="2697" y="361" width="14" height="3.5" fill="#6E6458"/>
<path d="M2690 204 H2712 Q2718 204 2718 212 V226 L2721 234 H2704 V204" fill="#DCE8F4" stroke="#8898B8" stroke-width="1.5"/><rect x="2690" y="204" width="14" height="20" fill="#F0F4FA" stroke="#A8986A" stroke-width="1.5"/>
<circle cx="2700" cy="211" r="5" fill="#E01818"/><rect x="2689" y="219" width="14" height="16" fill="#D83040"/><path d="M2692 223 L2700 231 M2700 223 L2692 231" stroke="#fff" stroke-width="2.5"/>
<text x="2705" y="265" font-family="Liberation Serif" font-weight="bold" font-style="italic" font-size="25" fill="#0A4E96" text-anchor="middle">@</text>
<path d="M2692 279 H2705 L2712 286 V310 H2692 Z" fill="#EEF3FA" stroke="#9A8040" stroke-width="2"/><path d="M2705 279 V286 H2712" fill="#E8D090"/>
<text x="2701" y="303" font-family="Liberation Mono" font-size="16" fill="#1A3E7A" text-anchor="middle">{=</text>
<path d="M2704 300 H2710 V296 L2719 303 L2710 310 V306 H2704 Z" fill="url(#gGold)" stroke="#C07818" stroke-width="1.8"/>
<path d="M2696 388 H2710 L2717 395 V414 H2696 Z" fill="#EEF3FA" stroke="#9A8040" stroke-width="2"/><path d="M2710 388 V395 H2717 Z" fill="#E8D090"/><path d="M2707 393 V404 Q2707 409 2701 409" stroke="#3A70B0" stroke-width="3.5" fill="none"/>
<path d="M79 157 H92 L99 164 V184 H79 Z" fill="#EEF3FA" stroke="#A48830" stroke-width="2"/><path d="M92 157 V164 H99 Z" fill="#E8D090"/><path d="M90 162 V173 Q90 178 85 178" stroke="#3A70B0" stroke-width="3.5" fill="none"/>
<path d="M79 171 L86 184 H72 Z" fill="#F8DC88" stroke="#D88A28" stroke-width="2" stroke-linejoin="round"/><path d="M79 175 V180" stroke="#3A1400" stroke-width="1.8"/><circle cx="79" cy="182.3" r="0.9" fill="#3A1400"/>
<path d="M396.0 160.0 L401.0 160.0 L406.0 165.0 L410.0 160.0 L415.0 160.0 L415.0 165.0 L410.0 169.5 L415.0 174.0 L415.0 179.0 L410.0 179.0 L405.5 174.0 L401.0 179.0 L396.0 179.0 L396.0 174.0 L400.5 169.5 L396.0 165.0 Z" fill="#fff" stroke="#6E6E6E" stroke-width="1.3"/>
<path d="M212.0 1118.0 L217.0 1118.0 L222.0 1123.0 L226.0 1118.0 L231.0 1118.0 L231.0 1123.0 L226.0 1127.5 L231.0 1132.0 L231.0 1137.0 L226.0 1137.0 L221.5 1132.0 L217.0 1137.0 L212.0 1137.0 L212.0 1132.0 L216.5 1127.5 L212.0 1123.0 Z" fill="#fff" stroke="#6E6E6E" stroke-width="1.3"/>
<rect x="2589.5" y="155.5" width="18" height="6" fill="#fff" stroke="#5E5E5E" stroke-width="1.2"/>
<rect x="2628.5" y="155.5" width="18" height="18" fill="#fff" stroke="#5E5E5E" stroke-width="1.2"/><path d="M2628.5 159.5 H2646.5" stroke="#5E5E5E" stroke-width="1.2"/>
<rect x="2589.5" y="1113.5" width="18" height="6" fill="#fff" stroke="#5E5E5E" stroke-width="1.2"/>
<rect x="2628.5" y="1113.5" width="18" height="18" fill="#fff" stroke="#5E5E5E" stroke-width="1.2"/><path d="M2628.5 1117.5 H2646.5" stroke="#5E5E5E" stroke-width="1.2"/>
<path d="M71 662.5 Q68 658.5 68 655.0 A7.2 7.2 0 0 1 82.4 655.0 Q82.4 658.5 79.5 662.5 Z M71 662.5 H79 V669.5 H71 Z" fill="#fff" stroke="#fff" stroke-width="3"/>
<path d="M85 655.5 L92 671.0 H78 Z" fill="#fff" stroke="#fff" stroke-width="3.5" stroke-linejoin="round"/>
<path d="M71 662.5 Q68.5 658.5 68.5 655.0 A6.7 6.7 0 0 1 82 655.0 Q82 658.5 79.5 662.5 Z" fill="url(#gBulb)" stroke="#EBA420" stroke-width="1.8"/>
<rect x="71" y="662.5" width="8.5" height="7" rx="1.5" fill="#D8DEE8" stroke="#6A7A92" stroke-width="1.6"/><rect x="72.5" y="669.0" width="5.5" height="1.5" fill="#3A4A68"/>
<path d="M85 657.0 L91 670.0 H79 Z" fill="#F8DC88" stroke="#D88A28" stroke-width="2.2" stroke-linejoin="round"/><path d="M85 661.0 V665.5" stroke="#3A1400" stroke-width="2"/><circle cx="85" cy="667.8" r="1" fill="#3A1400"/>
<path d="M71 778.5 Q68 774.5 68 771.0 A7.2 7.2 0 0 1 82.4 771.0 Q82.4 774.5 79.5 778.5 Z M71 778.5 H79 V785.5 H71 Z" fill="#fff" stroke="#fff" stroke-width="3"/>
<path d="M85 771.5 L92 787.0 H78 Z" fill="#fff" stroke="#fff" stroke-width="3.5" stroke-linejoin="round"/>
<path d="M71 778.5 Q68.5 774.5 68.5 771.0 A6.7 6.7 0 0 1 82 771.0 Q82 774.5 79.5 778.5 Z" fill="url(#gBulb)" stroke="#EBA420" stroke-width="1.8"/>
<rect x="71" y="778.5" width="8.5" height="7" rx="1.5" fill="#D8DEE8" stroke="#6A7A92" stroke-width="1.6"/><rect x="72.5" y="785.0" width="5.5" height="1.5" fill="#3A4A68"/>
<path d="M85 773.0 L91 786.0 H79 Z" fill="#F8DC88" stroke="#D88A28" stroke-width="2.2" stroke-linejoin="round"/><path d="M85 777.0 V781.5" stroke="#3A1400" stroke-width="2"/><circle cx="85" cy="783.8" r="1" fill="#3A1400"/>
<circle cx="141" cy="351" r="8" fill="#E2ECF6" stroke="#A6B4C8" stroke-width="1.8"/><path d="M136.5 351 H145.5" stroke="#505868" stroke-width="2"/>
<rect x="2646" y="206" width="16" height="16" fill="#F2C72C"/><path d="M2647 221.5 H2661.5 V207" stroke="#D8A820" stroke-width="1" fill="none"/>
<rect x="2642" y="230" width="23" height="2" fill="#909090"/>
<rect x="2647" y="657" width="15" height="7" fill="#FDF0D0" stroke="#F4C830" stroke-width="2"/>
<rect x="2647" y="789" width="15" height="7" fill="#FDF0D0" stroke="#F4C830" stroke-width="2"/>
<rect x="2673" y="153" width="1.2" height="927" fill="#FFFFFF"/>
<rect x="796.5" y="242.5" width="18" height="42" fill="none" stroke="#7F0055" stroke-width="1.2"/>
<path d="M696 679 L698 676 L700 679 L702 676 L704 679 L706 676 L708 679 L710 676 L712 679 L714 676 L716 679 L718 676 L720 679 L722 676 L724 679 L726 676 L728 679 L730 676 L732 679 L734 676 L736 679 L738 676 L740 679 L742 676 L744 679 L746 676 L748 679 L750 676 L752 679 L754 676 L756 679 L758 676" stroke="#F4C42A" stroke-width="1.2" fill="none"/>
<path d="M396 811 L398 808 L400 811 L402 808 L404 811 L406 808 L408 811 L410 808 L412 811 L414 808 L416 811 L418 808" stroke="#F4C42A" stroke-width="1.2" fill="none"/>
<path d="M2620.0 220.5 L2625.5 215 L2631.0 220.5" stroke="#BDBDBD" stroke-width="3" fill="none"/>
<path d="M2620.0 1031.5 L2625.5 1037 L2631.0 1031.5" stroke="#BDBDBD" stroke-width="3" fill="none"/>
<path d="M172.5 1064.0 L167 1069.5 L172.5 1075.0" stroke="#BDBDBD" stroke-width="3" fill="none"/>
<path d="M2586.0 1064.0 L2591.5 1069.5 L2586.0 1075.0" stroke="#BDBDBD" stroke-width="3" fill="none"/>
<path d="M2646.0 1212.5 L2651.5 1207 L2657.0 1212.5" stroke="#BDBDBD" stroke-width="3" fill="none"/>
<path d="M2646.0 1630.5 L2651.5 1636 L2657.0 1630.5" stroke="#BDBDBD" stroke-width="3" fill="none"/>
<path d="M88.5 1664.0 L83 1669.5 L88.5 1675.0" stroke="#BDBDBD" stroke-width="3" fill="none"/>
<path d="M2612.0 1664.0 L2617.5 1669.5 L2612.0 1675.0" stroke="#BDBDBD" stroke-width="3" fill="none"/>
<rect x="77.5" y="1115.5" width="24" height="20" rx="2.5" fill="#3A6CB4"/><rect x="79.5" y="1117.5" width="20" height="16" fill="#6A7890"/><rect x="80.5" y="1118.5" width="18" height="14" fill="#F6FAFE"/><rect x="80.5" y="1118.5" width="1.5" height="14" fill="#D0F0FF"/>
<path d="M82 1123 H92 M82 1127 H96" stroke="#3A4A90" stroke-width="1.8"/><rect x="84" y="1135" width="11" height="3" fill="#2E5A9A"/><rect x="78" y="1138" width="22" height="2.2" fill="#1E4A8A"/>
<rect x="2082.5" y="1114" width="20" height="20" rx="3" fill="#9A9A9A" stroke="#C4C4C4" stroke-width="3"/>
<path d="M2122.5 1114.5 L2139.5 1131.5 M2139.5 1114.5 L2122.5 1131.5" stroke="#5E5E5E" stroke-width="9" stroke-linecap="round"/>
<path d="M2122.5 1114.5 L2139.5 1131.5 M2139.5 1114.5 L2122.5 1131.5" stroke="#7E7E7E" stroke-width="6" stroke-linecap="round"/>
<path d="M2159 1111 L2173 1125 M2173 1111 L2159 1125" stroke="#505050" stroke-width="9" stroke-linecap="round"/>
<path d="M2159 1111 L2173 1125 M2173 1111 L2159 1125" stroke="#D4D4D4" stroke-width="6" stroke-linecap="round"/>
<path d="M2167 1121 L2181 1135 M2181 1121 L2167 1135" stroke="#5E5E5E" stroke-width="9" stroke-linecap="round"/>
<path d="M2167 1121 L2181 1135 M2181 1121 L2167 1135" stroke="#7E7E7E" stroke-width="6" stroke-linecap="round"/>
<rect x="2191" y="1106" width="1" height="34" fill="#6A6E78"/>
<path d="M2203 1108 H2216 L2223 1115 V1134 H2203 Z" fill="#F2F6FB" stroke="#A8986A" stroke-width="2"/><path d="M2216 1108 V1115 H2223 Z" fill="#E8D090"/><path d="M2206 1114 H2213 M2206 1118 H2219 M2206 1122 H2217 M2206 1126 H2215 M2206 1130 H2213" stroke="#4868A8" stroke-width="1.6"/>
<path d="M2220 1124.5 L2230 1134.5 M2230 1124.5 L2220 1134.5" stroke="#303030" stroke-width="5" stroke-linecap="round"/><path d="M2220 1124.5 L2230 1134.5 M2230 1124.5 L2220 1134.5" stroke="#8A8A8A" stroke-width="2.2" stroke-linecap="round"/>
<rect x="2244" y="1110" width="26" height="26" fill="#EEF8FE" stroke="#A8986A" stroke-width="2"/><rect x="2262" y="1111" width="7" height="24" fill="#DDE4EE" stroke="#5A78B0" stroke-width="1.5"/><rect x="2264" y="1113" width="2.5" height="2.5" fill="#2A4A98"/><rect x="2264" y="1130" width="2.5" height="2.5" fill="#2A4A98"/><rect x="2262" y="1117" width="7" height="10" fill="#C8D0E0"/>
<path d="M2244.5 1127 V1124 A4.8 4.8 0 0 1 2254 1124 V1127" stroke="#A88018" stroke-width="2.6" fill="none"/><rect x="2242" y="1127" width="14.5" height="11" rx="1.5" fill="url(#gLock)" stroke="#A0600A" stroke-width="1.4"/><path d="M2249.2 1131 V1135" stroke="#222" stroke-width="1.8"/>
<path d="M2281 1108 H2295 L2301 1114 V1134 H2281 Z" fill="#F2F6FB" stroke="#B8A880" stroke-width="2"/><path d="M2284 1114 H2295 M2284 1118 H2293 M2284 1122 H2291 M2284 1126 H2291 M2284 1130 H2290" stroke="#6A82B8" stroke-width="1.6"/>
<path d="M2306 1112 V1126 H2297" stroke="#D8B060" stroke-width="4" fill="none"/><path d="M2306 1112 V1126 H2297" stroke="#F6E0A0" stroke-width="1.6" fill="none"/><path d="M2298 1120 L2291 1126 L2298 1132 Z" fill="#F4DC98" stroke="#D0A048" stroke-width="1.2"/>
<rect x="2314.5" y="1104.5" width="77" height="36" fill="#B5D6F4" stroke="#84B9EC" stroke-width="1"/><rect x="2352.5" y="1104.5" width="1.2" height="36" fill="#84B9EC"/>
<rect x="2321" y="1122" width="11.5" height="10" fill="#F4F8FC" stroke="#3C6EB0" stroke-width="2"/><rect x="2324" y="1132" width="6" height="2" fill="#3C6EB0"/><rect x="2322" y="1135" width="10" height="2" fill="#3C6EB0"/>
<path d="M2328 1124 L2334 1129 H2350 L2348 1126 Z" fill="#8AA8C8" opacity="0.5"/>
<rect x="2328" y="1110" width="22" height="15.5" fill="#F4F8FC" stroke="#3C6EB0" stroke-width="2.2"/>
<path d="M2332 1116 H2341 M2332 1120 H2346" stroke="#4A5AA0" stroke-width="2"/>
<rect x="2360" y="1122" width="11.5" height="10" fill="#F4F8FC" stroke="#3C6EB0" stroke-width="2"/><rect x="2363" y="1132" width="6" height="2" fill="#3C6EB0"/><rect x="2361" y="1135" width="10" height="2" fill="#3C6EB0"/>
<path d="M2367 1124 L2373 1129 H2389 L2387 1126 Z" fill="#8AA8C8" opacity="0.5"/>
<rect x="2367" y="1110" width="22" height="15.5" fill="#F4F8FC" stroke="#3C6EB0" stroke-width="2.2"/>
<path d="M2370.5 1113 L2378.5 1122 M2378.5 1113 L2370.5 1122" stroke="#E03030" stroke-width="3" stroke-linecap="round"/><path d="M2381 1116 H2386 M2381 1120 H2386" stroke="#4A5AA0" stroke-width="2"/>
<rect x="2394" y="1106" width="1" height="34" fill="#6A6E78"/>
<rect x="2408" y="1115" width="26" height="22" fill="url(#gWin)" stroke="#9A8450" stroke-width="2"/>
<rect x="2407" y="1114" width="24" height="6" fill="url(#gTitle)"/>
<path d="M2424.5 1125 L2428 1121.5" stroke="#000" stroke-width="2.2"/>
<g transform="rotate(45 2432 1117)"><rect x="2428.5" y="1115" width="7" height="7" rx="1" fill="#4E9A2A" stroke="#138A30" stroke-width="1.5"/><ellipse cx="2432" cy="1113.5" rx="5.5" ry="3" fill="#7CC048" stroke="#138A30" stroke-width="1.5"/></g>
<rect x="2449" y="1110" width="24" height="19" rx="3" fill="#E8E8E8" stroke="#A0A0A0" stroke-width="3"/><path d="M2454 1116 H2462 M2454 1121 H2468" stroke="#A0A0A0" stroke-width="2"/><rect x="2452" y="1132" width="19" height="3" fill="#A8A8A8"/>
<polygon points="2486,1119 2500,1119 2493.0,1127" fill="#707070"/>
<rect x="2516" y="1113" width="27" height="22" fill="url(#gWin)" stroke="#8F7E48" stroke-width="2"/><rect x="2515" y="1112" width="22" height="5" fill="#4A8ED0"/><path d="M2520 1133 Q2535 1133 2538 1122" stroke="#F6E2A0" stroke-width="3" fill="none"/>
<polygon points="2538,1107.5 2544.5,1114 2538,1120.5 2531.5,1114" fill="#D9B040" stroke="#A8841C" stroke-width="1.8"/>
<path d="M2534.8 1114 H2541.2 M2538 1110.8 V1117.2" stroke="#FFF8E0" stroke-width="2.2"/>
<polygon points="2556,1119 2570,1119 2563.0,1127" fill="#222"/></svg>
<!--E:parts-->
</body></html>
